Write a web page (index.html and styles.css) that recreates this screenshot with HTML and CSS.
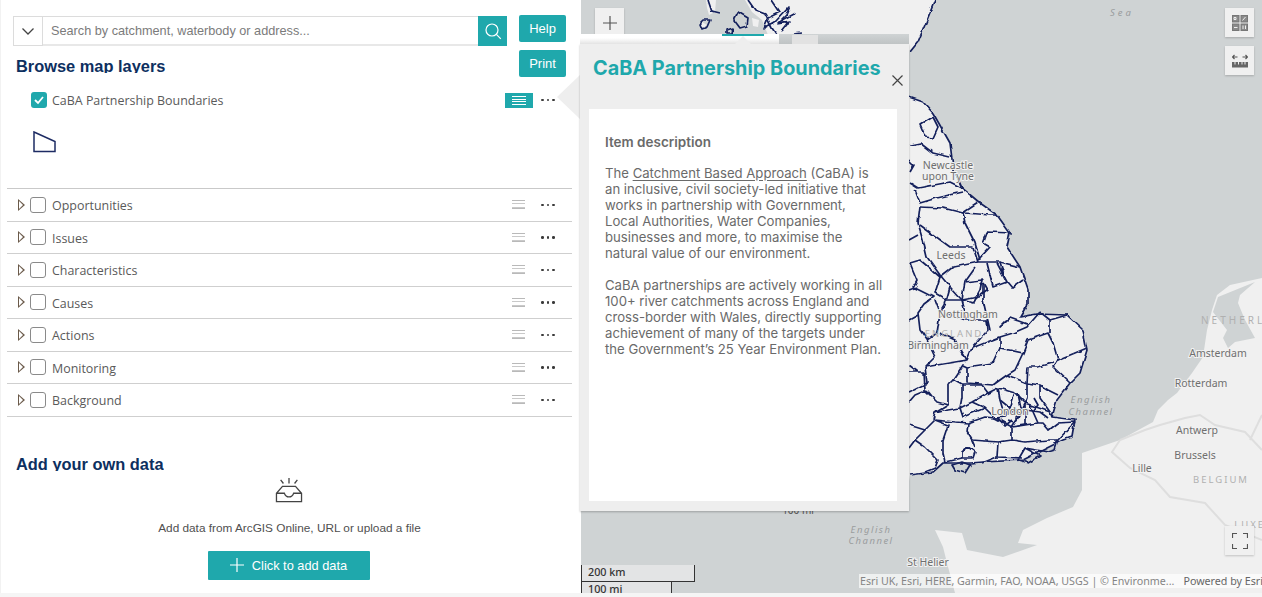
FILE: index.html
```html
<!DOCTYPE html>
<html lang="en">
<head>
<meta charset="utf-8">
<title>CaBA Map</title>
<link rel="stylesheet" href="styles.css">
</head>
<body>
<div class="app">
  <aside class="sidebar">
    <header class="top">
      <div class="top-left">
        <div class="search">
          <button class="search-drop" aria-label="Search options">
            <svg width="14" height="14" viewBox="0 0 14 14"><path d="M1.5 4.5 7 10l5.5-5.5" class="ln-dark"/></svg>
          </button>
          <div class="search-input">Search by catchment, waterbody or address...</div>
          <button class="search-go" aria-label="Search">
            <svg width="18" height="18" viewBox="0 0 18 18"><circle cx="8" cy="8" r="6" class="ln-white"/><path d="m12.4 12.4 4.4 4.4" class="ln-white"/></svg>
          </button>
        </div>
        <h2 class="section-title">Browse map layers</h2>
      </div>
      <div class="top-right">
        <button class="action">Help</button>
        <button class="action">Print</button>
      </div>
    </header>

    <div class="active-layer">
      <span class="check check-on">
        <svg width="16" height="16" viewBox="0 0 16 16"><path d="m4 8 3 3 5-6" class="ln-check"/></svg>
      </span>
      <span class="layer-name">CaBA Partnership Boundaries</span>
      <button class="list-btn" aria-label="Legend">
        <svg width="14" height="9" viewBox="0 0 14 9"><path d="M0 .5h14M0 3.500h14M0 5.500h14M0 8.500h14" class="ln-white"/></svg>
      </button>
      <span class="dots"><i></i><i></i><i></i></span>
    </div>
    <div class="legend">
      <svg width="24" height="22" viewBox="0 0 24 22"><path d="M1 1 22 10.500V20.500H1Z" class="ln-legend"/></svg>
    </div>

    <ul class="layers">
      <li class="layer"><span class="caret"></span><span class="check"></span><span class="layer-name">Opportunities</span><span class="drag"></span><span class="dots"><i></i><i></i><i></i></span></li>
      <li class="layer"><span class="caret"></span><span class="check"></span><span class="layer-name">Issues</span><span class="drag"></span><span class="dots"><i></i><i></i><i></i></span></li>
      <li class="layer"><span class="caret"></span><span class="check"></span><span class="layer-name">Characteristics</span><span class="drag"></span><span class="dots"><i></i><i></i><i></i></span></li>
      <li class="layer"><span class="caret"></span><span class="check"></span><span class="layer-name">Causes</span><span class="drag"></span><span class="dots"><i></i><i></i><i></i></span></li>
      <li class="layer"><span class="caret"></span><span class="check"></span><span class="layer-name">Actions</span><span class="drag"></span><span class="dots"><i></i><i></i><i></i></span></li>
      <li class="layer"><span class="caret"></span><span class="check"></span><span class="layer-name">Monitoring</span><span class="drag"></span><span class="dots"><i></i><i></i><i></i></span></li>
      <li class="layer"><span class="caret"></span><span class="check"></span><span class="layer-name">Background</span><span class="drag"></span><span class="dots"><i></i><i></i><i></i></span></li>
    </ul>

    <section class="add-data">
      <h2 class="section-title add-title">Add your own data</h2>
      <svg class="inbox" width="30" height="26" viewBox="0 0 32 28">
        <path d="M16 1v6M7 3l3 4M25 3l-3 4M9 10h14l6.500 7.500V26.500H2.500V17.500ZM2.500 17.500H11c1 3 2.500 4 5 4s4-1 5-4h8.500" class="ln-inbox"/>
      </svg>
      <p class="add-text">Add data from ArcGIS Online, URL or upload a file</p>
      <button class="add-btn">
        <svg width="14" height="14" viewBox="0 0 14 14"><path d="M7 0v14M0 7h14" class="ln-white"/></svg>
        Click to add data
      </button>
    </section>
  </aside>

  <main class="map">
    <svg class="basemap" viewBox="581 0 681 593" aria-label="Map of England and the near continent">
      <defs>
        <filter id="rough" x="-5%" y="-5%" width="110%" height="110%" color-interpolation-filters="sRGB">
          <feTurbulence type="fractalNoise" baseFrequency="0.1" numOctaves="2" seed="7"/>
          <feDisplacementMap in="SourceGraphic" scale="4" xChannelSelector="R" yChannelSelector="G"/>
        </filter>
      </defs>
      <path class="land" d="M745 0 752 12 762 20 768 35 760 505H905L910 475 933 472 943 463 970 463 983 462 1023 460 1063 440 1072 437 1075 420 1052 417 1057 400 1070 383 1080 373 1087 350 1083 330 1067 315 1037 314 1020 317 1028 303 1028 290 1020 267 1007 247 1010 233 997 215 980 203 962 188 953 167 950 143 933 113 923 102 909 97 905 55 918 42 927 20 935 0Z"/>
      <path class="land" d="M1262 278 1230 285 1217 295 1212 310 1207 330 1203 357 1192 373 1177 393 1168 400 1158 410 1153 422 1120 440 1082 453 1082 490 1073 507 1047 518 1023 530 1018 543 1037 545 1003 557 967 550 962 533 935 530 943 547 947 563 955 593H1262Z"/>
      <path class="water" d="M1218 297 1255 282 1240 295 1238 303 1245 320 1255 338 1235 342 1228 348 1223 338 1227 330 1213 312Z"/>
      <path class="land" d="M706 0H716L715 12 709 15 707 8ZM702 22 707 25 704 29 700 27ZM752 18 759 20 758 27 753 26Z"/>
      <path class="border" d="M1120 440 1145 430 1160 425 1185 418 1200 415 1215 425 1245 432 1262 450M1120 440 1112 452 1130 468 1155 480 1170 497 1205 503 1225 525 1262 540M1262 415 1250 440"/>

      <g class="boundaries" filter="url(#rough)">
        <path d="M748 0 755 10 765 14 772 28 776 34M772 0 780 12 768 18 764 28 775 22 790 6 786 16 778 24 790 22 782 32M795 14 780 22 790 24M738 12 748 18 747 26 740 28 734 20ZM710 20 707 27 702 29 700 24 704 20ZM708 0 712 12 720 14M727 30 733 28 732 33 727 33ZM794 33 802 32M935 0 927 20 918 42 910 52"/>
        <path d="M909 97 923 102 933 113 950 143 953 167 962 188 980 203 997 215 1010 233 1007 247 1020 267 1028 290 1028 303 1020 317 1037 314 1067 315 1083 330 1087 350 1080 373 1070 383 1057 400 1052 417 1075 420 1072 437 1063 440 1023 460 983 462 970 463 943 463 933 472 910 475"/>
        <path d="M910 145 920 143 933 153 950 157M920 125 933 117 938 127 933 138 925 137ZM910 183 918 188 950 182 962 188M915 190 920 203 937 198 963 192M920 207 943 208 963 213 978 203M963 213 965 223 975 243 980 260M965 213 990 215 997 215M909 160 914 165 910 172"/>
        <path d="M920 207 918 223 923 240 927 257 940 275 950 287 962 300 978 297 987 290 983 283M920 225 950 247 973 247 978 262M910 263 920 260 932 270 940 277 953 267 978 262 1000 262 1020 267M1012 233 987 232 983 243 990 247 978 260M909 240 918 235"/>
        <path d="M987 263 993 287 1007 282 997 263M1007 282 1012 288 1023 280M975 268 965 282 962 300 973 303 980 290 982 280 965 282M983 283 983 300 990 330M940 277 935 293 947 300 962 300M1000 262 1004 275"/>
        <path d="M910 263 917 280 913 287 933 297 925 303 918 313 920 330 927 340 937 333 940 313 935 300M909 320 918 315M909 345 920 342M940 313 967 320 987 320 988 330 972 348 967 360 925 367M927 340 935 357 925 367 927 383 909 392M972 348 1000 337 1013 333 1027 327 1040 312M1007 320 1000 327 1010 318 1027 324M950 287 945 305 940 313M962 300 967 320M909 290 917 287M940 333 955 340 967 360"/>
        <path d="M1000 348 993 363 967 367 963 365 953 380 962 385M1000 348 1023 353 1028 340 1048 333 1053 343 1058 360 1087 348M1050 333 1050 320 1040 312M1050 320 1067 315M1023 353 1015 370 1007 375 1027 383 1028 367 1038 367 1053 363M1058 360 1053 367 1070 383M967 367 967 383 993 385 1007 375M1027 383 1027 398 1025 403M1000 337 1000 348M909 372 924 372M909 365 918 372"/>
        <path d="M924 372 925 390 935 400 937 402 948 405M927 390 915 395 909 402M948 385 948 405 935 413 933 420M962 385 962 397 960 408 948 410 935 413M962 385 982 385 988 393 972 402 960 408M988 393 998 388 1015 393 1025 403 1050 412 1052 417M985 408 972 402M960 408 963 417 985 408 995 418 1005 417 1000 400 998 388M948 385 953 380M935 400 927 390"/>
        <path d="M935 420 955 422 968 423 985 417 995 418 1012 427 1038 423 1042 423 1048 430 1057 423 1075 422M1012 427 1012 440 998 442 997 457 1022 458M1012 440 1025 442 1048 440 1058 440 1075 422M1025 448 1018 460 1028 463 1040 456 1025 448 1048 452 1055 450 1058 440M972 440 967 432 968 423M972 440 998 442M943 440 948 425 935 420 925 430 915 440 909 448M915 440 925 447 938 460 935 468 925 472M909 425 925 430"/>
        <path d="M943 440 943 453 945 462 962 458M962 452 968 447 975 452 973 458 962 458ZM975 447 972 440M982 463 997 457M952 465 962 462 970 465 965 473 955 470ZM1005 417 1012 412 1018 418 1012 427M1000 400 1010 408 1015 393M1010 408 1005 417M1018 418 1025 403 1025 425M1030 405 1038 423M1025 410 1040 412 1048 418M1002 410 1008 415 1014 408 1020 414 1015 422 1008 420M998 418 1005 426 1012 420M1018 394 1022 412M1034 398 1038 405 1032 412"/>
        <path d="M1058 395 1048 390 1040 385 1027 383M1040 385 1040 398 1050 412"/>
      </g>

      <g class="labels">
        <text x="948" y="169" class="city">Newcastle</text>
        <text x="948" y="180" class="city">upon Tyne</text>
        <text x="951" y="259" class="city">Leeds</text>
        <text x="968" y="318" class="city">Nottingham</text>
        <text x="954" y="337" class="country">ENGLAND</text>
        <text x="938" y="349" class="city">Birmingham</text>
        <text x="1010" y="415" class="city">London</text>
        <text x="1218" y="357" class="city">Amsterdam</text>
        <text x="1201" y="387" class="city">Rotterdam</text>
        <text x="1197" y="434" class="city">Antwerp</text>
        <text x="1195" y="459" class="city">Brussels</text>
        <text x="1142" y="472" class="city">Lille</text>
        <text x="1221" y="483" class="country">BELGIUM</text>
        <text x="1201" y="324" class="country country-wide">NETHERL</text>
        <text x="1255" y="528" class="country">LUXEM</text>
        <text x="928" y="566" class="city">St Helier</text>
        <text x="1122" y="16" class="sea sea-wide">Sea</text>
        <text x="1091" y="403" class="sea">English</text>
        <text x="1091" y="415" class="sea">Channel</text>
        <text x="871" y="533" class="sea">English</text>
        <text x="871" y="544" class="sea">Channel</text>
        <text x="798" y="514" class="under">100 mi</text>
      </g>
    </svg>

    <button class="map-btn btn-zoom" aria-label="Zoom in">
      <svg width="16" height="16" viewBox="0 0 16 16"><path d="M8 1v14M1 8h14" class="ln-map"/></svg>
    </button>
    <button class="map-btn btn-basemap" aria-label="Basemap">
      <svg width="16" height="16" viewBox="0 0 16 16"><rect x="0.500" y="0.500" width="6.500" height="6.500" class="ic-box"/><rect x="9" y="0.500" width="6.500" height="6.500" class="ic-box"/><rect x="0.500" y="9" width="6.500" height="6.500" class="ic-box"/><rect x="9" y="9" width="6.500" height="6.500" class="ic-box"/><path d="M2 2.500h2v2h-2zM10.500 5.500l3-3.500M2 12.500h3.500M11 10.500v3.500M13.500 10.500v3.500" class="ic-white"/></svg>
    </button>
    <button class="map-btn btn-measure" aria-label="Measure">
      <svg width="16" height="14" viewBox="0 0 16 14"><path d="M0.500 3h5M2.500 1 .5 3l2 2M15.500 3h-5M13.500 1l2 2-2 2" class="ln-map"/><rect x="0" y="8" width="16" height="5.500" class="ic-fill"/><path d="M3 8v2.500M6.500 8v2.500M10 8v2.500M13 8v2.500" class="ic-white"/></svg>
    </button>
    <button class="map-btn btn-full" aria-label="Full screen">
      <svg width="16" height="16" viewBox="0 0 16 16"><path d="M.5 5V.5H5M11 .5h4.500V5M15.500 11v4.500H11M5 15.500H.5V11" class="ln-map"/></svg>
    </button>

    <div class="scale">
      <div class="scale-km">200 km</div>
      <div class="scale-mi">100 mi</div>
    </div>
    <div class="attribution">
      <span class="attr-text">Esri UK, Esri, HERE, Garmin, FAO, NOAA, USGS | © Environme...</span>
      <span class="attr-power">Powered by Esri</span>
    </div>

    <div class="pop-arrow"></div>
    <div class="popup">
      <div class="pop-strip">
        <div class="pop-fade"><span class="pop-tab"></span><span class="pop-notch"></span></div>
        <div class="pop-grey"><span class="pop-chip"></span></div>
      </div>
      <h1 class="pop-title">CaBA Partnership Boundaries</h1>
      <button class="pop-close" aria-label="Close">
        <svg width="11" height="11" viewBox="0 0 11 11"><path d="m.5.5 10 10M10.500.5l-10 10" class="ln-close"/></svg>
      </button>
      <div class="pop-body">
        <h3 class="pop-h3">Item description</h3>
        <p class="pop-p">The <a class="pop-link">Catchment Based Approach</a> (CaBA) is an inclusive, civil society-led initiative that works in partnership with Government, Local Authorities, Water Companies, businesses and more, to maximise the natural value of our environment.</p>
        <p class="pop-p">CaBA partnerships are actively working in all 100+ river catchments across England and cross-border with Wales, directly supporting achievement of many of the targets under the Government’s 25 Year Environment Plan.</p>
      </div>
    </div>
  </main>
</div>
</body>
</html>
```

FILE: styles.css
```css
* { box-sizing: border-box; }
html, body { margin: 0; height: 100%; overflow: hidden; background: #f5f5f5; }
body { font-family: "Liberation Sans", Arial, sans-serif; }
button { font: inherit; border: 0; padding: 0; cursor: pointer; }
h1, h2, h3, p, ul { margin: 0; padding: 0; }
ul { list-style: none; }

.app { display: flex; height: 593px; }

/* icon strokes */
.ln-dark, .ln-white, .ln-check, .ln-legend, .ln-inbox, .ln-map, .ln-close { fill: none; }
.ln-dark { stroke: #444; stroke-width: 1.300; }
.ln-white { stroke: #fff; stroke-width: 1.200; }
.ln-check { stroke: #fff; stroke-width: 1.800; }
.ln-legend { stroke: #1d2b63; stroke-width: 1.500; }
.ln-inbox { stroke: #444; stroke-width: 1.400; }
.ln-map { stroke: #555; stroke-width: 1.200; }
.ln-close { stroke: #444; stroke-width: 1.200; }
.ic-box { fill: #8a8a8a; stroke: #777; }
.ic-fill { fill: #666; }
.ic-white { stroke: #eee; stroke-width: 1; fill: none; }

/* sidebar */
.sidebar { width: 581px; flex: none; background: #fff; border-left: 1px solid #f2f2f2; padding: 0 9px 0 6px; display: flex; flex-direction: column; }
.top { display: flex; gap: 12px; padding: 15px 6px 0 6px; height: 84px; }
.top-left { flex: 1; min-width: 0; padding-top: 1px; }
.top-right { width: 47px; display: flex; flex-direction: column; gap: 8px; }
.action { height: 27px; background: #1fa8ac; color: #fff; font-size: 13px; border-radius: 2px; }

.search { display: flex; height: 30px; }
.search-drop { width: 30px; background: #fff; border: 1px solid #dcdcdc; display: flex; align-items: center; justify-content: center; }
.search-input { flex: 1; font-size: 12.700px; line-height: 28px; color: #7b7b7b; padding-left: 8px; border-top: 1px solid #dcdcdc; border-bottom: 2px solid #e8e8e8; white-space: nowrap; }
.search-go { width: 29px; background: #1fa8ac; display: flex; align-items: center; justify-content: center; }

.section-title { font-size: 16.400px; font-weight: 700; color: #0d2f5f; line-height: 18px; height: 16px; overflow: hidden; }
.top-left .section-title { margin: 11px 0 0 3px; }

.active-layer { display: flex; align-items: center; height: 32px; padding: 0 17px 0 24px; }
.layer-name { font-family: "Open Sans", sans-serif; font-size: 12.450px; color: #5a5a5a; flex: 1; margin-left: 5px; }
.layer .layer-name { margin-left: 6px; padding-top: 2px; }
.check { width: 16px; height: 16px; flex: none; border: 1px solid #8a8a8a; border-radius: 3px; background: #fff; display: block; }
.check-on { background: #1fa8ac; border: 0; }
.list-btn { width: 28px; height: 15px; background: #1fa8ac; display: flex; align-items: center; justify-content: center; margin-right: 8px; }
.dots { display: flex; gap: 3px; width: 14px; flex: none; }
.dots i { width: 2.500px; height: 2.500px; border-radius: 50%; background: #3a3a3a; display: block; }

.legend { height: 72px; padding: 15px 0 0 26px; }

.layers { border-top: 1px solid #c9c9c9; }
.layer { display: flex; align-items: center; height: 32.500px; border-bottom: 1px solid #cfcfcf; padding: 0 17px 0 11px; }
.caret { width: 0; height: 0; flex: none; position: relative; border-left: 7px solid #6b5a4a; border-top: 6px solid transparent; border-bottom: 6px solid transparent; margin-right: 5px; }
.caret::after { content: ""; position: absolute; left: -6px; top: -4px; border-left: 4.500px solid #fff; border-top: 4px solid transparent; border-bottom: 4px solid transparent; }
.drag { width: 13px; height: 9px; flex: none; margin-right: 16px; border-top: 1px solid #b9b9b9; border-bottom: 1px solid #b9b9b9; position: relative; }
.drag::before { content: ""; position: absolute; left: 0; right: 0; top: 2px; height: 3px; border-top: 1px solid #c9c9c9; border-bottom: 1px solid #c9c9c9; }

.add-data { display: flex; flex-direction: column; align-items: center; }
.add-title { align-self: flex-start; margin: 38px 0 0 9px; }
.inbox { margin-top: 6px; margin-right: 1px; }
.add-text { font-size: 11.800px; color: #4f4f4f; margin-top: 18px; line-height: 14px; }
.add-btn { margin: 16px 2px 0 0; width: 162px; height: 29px; background: #1fa8ac; color: #fff; font-size: 12.800px; border-radius: 1px; display: flex; align-items: center; justify-content: center; gap: 8px; }

/* map */
.map { flex: 1; position: relative; background: #cfd3d4; overflow: visible; }
.basemap { position: absolute; inset: 0; width: 681px; height: 593px; display: block; }
.land { fill: #f0f0f0; }
.water { fill: #cfd3d4; }
.border { fill: none; stroke: #dedede; stroke-width: 2; }
.boundaries path { fill: none; stroke: #14205c; stroke-width: 1.700; stroke-linejoin: round; }
.labels text { font-family: "Noto Sans", sans-serif; text-anchor: middle; paint-order: stroke; }
.city { font-size: 10.500px; fill: #6f6f6f; stroke: #f2f2f2; stroke-width: 2px; }
.country { font-size: 9.500px; letter-spacing: 2px; fill: #b0b0b0; }
.labels .country-wide { letter-spacing: 3px; font-size: 10px; text-anchor: start; }
.sea { font-size: 9.500px; font-style: italic; letter-spacing: 1.500px; fill: #9a9d9e; }
.sea-wide { letter-spacing: 3px; }
.under { font-size: 10px; fill: #555; }

.map-btn { position: absolute; width: 29px; height: 29px; background: #f0f0f0; box-shadow: 0 1px 2px rgba(0,0,0,.2); display: flex; align-items: center; justify-content: center; }
.btn-zoom { left: 14px; top: 8px; }
.btn-basemap { left: 644px; top: 8px; }
.btn-measure { left: 644px; top: 46px; }
.btn-full { left: 644px; top: 526px; }

.scale { position: absolute; left: 0; bottom: 0; height: 28px; width: 114px; font-family: "Noto Sans", sans-serif; font-size: 10.800px; line-height: 14px; color: #333; font-weight: 500; overflow: hidden; }
.scale-km { height: 17px; width: 114px; padding-left: 6px; background: rgba(240,240,240,.6); border-left: 1.500px solid #333; border-right: 1.500px solid #333; border-bottom: 1.500px solid #333; }
.scale-mi { height: 15px; width: 91px; padding-left: 6px; background: rgba(240,240,240,.6); border-left: 1.500px solid #333; border-right: 1.500px solid #333; }

.attribution { position: absolute; left: 278px; right: 0; top: 574px; height: 14px; background: rgba(255,255,255,.65); display: flex; justify-content: space-between; font-family: "Noto Sans", sans-serif; font-size: 10.700px; line-height: 14px; color: #858585; padding: 0 0 0 1px; white-space: nowrap; overflow: hidden; }
.attr-power { color: #666; margin-right: -1px; }

.pop-arrow { position: absolute; left: -24px; top: 75px; width: 0; height: 0; border-right: 23px solid #eee; border-top: 22px solid transparent; border-bottom: 22px solid transparent; }
.popup { position: absolute; left: -1px; top: 44px; width: 329px; height: 467px; background: #eee; padding: 0 12px 10px 9px; box-shadow: 0 1px 2px rgba(0,0,0,.25); display: flex; flex-direction: column; }
.pop-strip { position: absolute; left: 0; right: 0; top: -10px; height: 10px; display: flex; }
.pop-fade { width: 199px; position: relative; background: linear-gradient(#fff 40%, #e3e3e3); }
.pop-tab { position: absolute; left: 142px; top: 0; width: 42px; height: 2px; background: #1fa8ac; }
.pop-notch { position: absolute; left: 155px; top: 2px; border-bottom: 8px solid #eee; border-left: 8px solid transparent; border-right: 8px solid transparent; }
.pop-grey { flex: 1; background: linear-gradient(#cfd3d4, #bfc3c4); position: relative; }
.pop-chip { position: absolute; left: 13px; top: 1px; width: 26px; height: 9px; background: #e2e2e2; }
.pop-title { font-family: Inter, sans-serif; font-size: 19.850px; font-weight: 700; color: #1fa8ac; line-height: 24px; margin: 12px 0 0 4px; white-space: nowrap; }
.pop-close { position: absolute; left: 312px; top: 31px; width: 11px; height: 11px; background: none; display: block; line-height: 0; }
.pop-body { margin-top: 29px; flex: 1; background: #fff; padding: 25px 14.500px 0 16px; font-family: Inter, sans-serif; font-size: 13.150px; line-height: 16px; color: #6a6a6a; }
.pop-h3 { font-size: 13.500px; font-weight: 600; line-height: 16px; margin-bottom: 15px; }
.pop-p { margin-bottom: 16px; }
.pop-link { color: inherit; text-decoration: underline; text-underline-offset: 2px; }
```
